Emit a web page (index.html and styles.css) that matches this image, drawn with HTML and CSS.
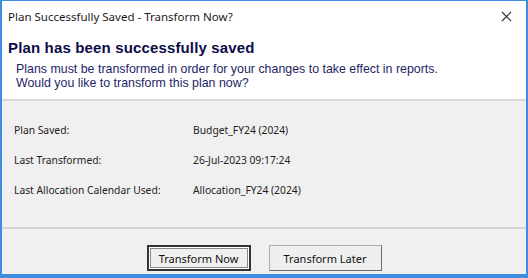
FILE: index.html
```html
<!DOCTYPE html>
<html lang="en">

<head>
    <meta charset="UTF-8">
    <title>Plan Successfully Saved - Transform Now?</title>
    <link rel="stylesheet" href="styles.css">
</head>

<body>
    <div class="window">
        <!-- title bar -->
        <div class="titlebar">
            <span class="title">Plan Successfully Saved - Transform Now?</span>
            <svg class="close" width="11" height="11" viewBox="0 0 11 11">
                <path d="M1 1 L10 10 M10 1 L1 10" stroke="#333" stroke-width="1.2" fill="none" />
            </svg>
        </div>

        <!-- header message -->
        <div class="header">
            <h1>Plan has been successfully saved</h1>
            <p>Plans must be transformed in order for your changes to take effect in reports.</p>
            <p>Would you like to transform this plan now?</p>
        </div>

        <!-- plan details -->
        <div class="details">
            <div class="row">
                <span class="label">Plan Saved:</span>
                <span class="value">Budget_FY24 (2024)</span>
            </div>
            <div class="row">
                <span class="label">Last Transformed:</span>
                <span class="value">26-Jul-2023 09:17:24</span>
            </div>
            <div class="row">
                <span class="label">Last Allocation Calendar Used:</span>
                <span class="value">Allocation_FY24 (2024)</span>
            </div>
        </div>

        <!-- buttons -->
        <div class="footer">
            <button class="default">Transform Now</button>
            <button>Transform Later</button>
        </div>
    </div>
</body>

</html>
```

FILE: styles.css
```css
body {
    margin: 0;
    font-family: "Noto Sans", "Open Sans", sans-serif;
}

.window {
    width: 528px;
    height: 278px;
    box-sizing: border-box;
    border: 2px solid #3d8ee3;
    border-top-width: 1px;
    border-bottom-width: 4px;
    background-color: #f0f0f0;
    display: flex;
    flex-direction: column;
}

.titlebar {
    background: #fff;
    height: 30px;
    display: flex;
    align-items: center;
    justify-content: space-between;
    padding: 0 14px 0 6px;
}

.title {
    font-size: 11.5px;
    color: #1a1a1a;
}

.header {
    background: #fff;
    padding: 8px 0 9px 6px;
    border-bottom: 2px solid #dadada;
    font-family: "Liberation Sans", Arial, sans-serif;
    color: #1f1f66;
}

.header h1 {
    margin: 0 0 6px 0;
    font-size: 15px;
    font-weight: bold;
    color: #0c0c4a;
    letter-spacing: 0.15px;
}

.header p {
    margin: 0 0 0 8px;
    font-size: 12.4px;
    line-height: 14px;
}

.details {
    flex: 1;
    padding: 14px 0 0 12px;
    border-bottom: 2px solid #d4d4d4;
    font-size: 10.3px;
    color: #222;
}

.row {
    display: flex;
    height: 30px;
    align-items: center;
}

.label {
    width: 179px;
}

.footer {
    display: flex;
    justify-content: center;
    gap: 18px;
    padding: 16px 0 3px 0;
}

button {
    font-family: "Noto Sans", "Open Sans", sans-serif;
    font-size: 11px;
    color: #111;
    background: #efefef;
    border: 1px solid #adadad;
    border-right-color: #6d6d6d;
    border-bottom-color: #6d6d6d;
    height: 26px;
    width: 113px;
    padding: 0;
}

button.default {
    width: 104px;
    border: 2px solid #333;
    box-shadow: inset 0 0 0 1px #fff, inset 0 0 0 2px #888;
}
```
